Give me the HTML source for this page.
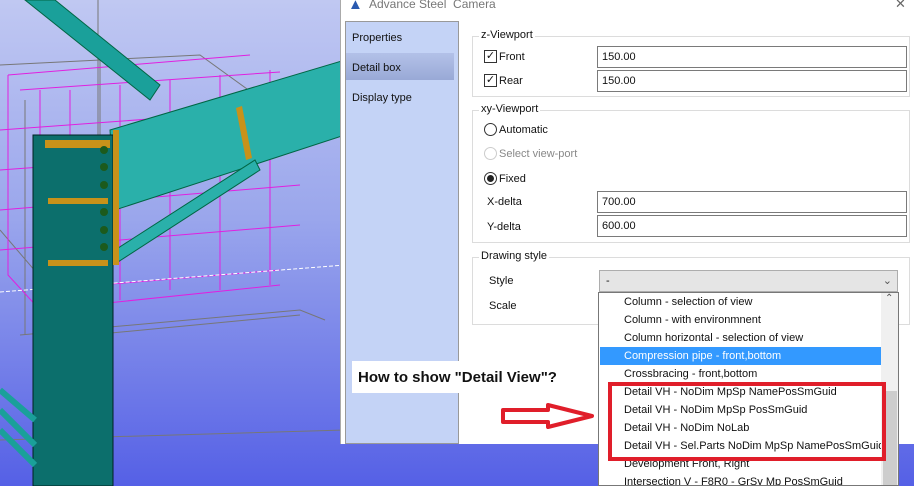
<!DOCTYPE html>
<html><head><meta charset="utf-8"><style>
*{margin:0;padding:0;box-sizing:border-box}
body{width:914px;height:486px;overflow:hidden;position:relative;font-family:"Liberation Sans",sans-serif;font-size:11px;color:#111;background:linear-gradient(#c0c8f2 0%,#9aa6ec 45%,#5560e6 100%)}
.a{position:absolute}
.fs{position:absolute;border:1px solid #dcdcdc}
.lg{position:absolute;background:#fff;padding:0 2px;font-size:11px;top:-8px;left:6px}
.inp{position:absolute;border:1px solid #7a7a7a;background:#fff;padding:4px 4px;height:22px}
.cb{position:absolute;width:13px;height:13px;border:1px solid #333;background:#fff;font-size:11px;line-height:11px;text-align:center}
.rd{position:absolute;width:13px;height:13px;border:1px solid #333;border-radius:50%;background:#fff}
.it{position:absolute;left:25px;font-size:11px;height:18px;line-height:18px;white-space:nowrap}
</style></head><body>
<svg class="a" style="left:0;top:0" width="345" height="486">
<g fill="none" stroke="#777" stroke-width="1">
<path d="M0 65 L200 55 L290 120 M20 335 L300 310 L325 320 M25 335 L25 100 M100 60 L100 310 M0 230 L90 335 L300 315"/>
<path d="M98 0 L98 320 M0 440 L345 430"/>
</g>
<g fill="none" stroke="#e020e0" stroke-width="1">
<path d="M8 75 L250 55 M20 90 L280 72 M40 290 L280 270 M8 75 L8 275 L40 310 L280 285 M40 90 L40 310"/>
<path d="M0 130 L300 108 M0 170 L300 148 M0 210 L300 185 M0 250 L300 225"/>
<path d="M70 90 L70 300 M120 85 L120 300 M170 80 L170 290 M220 75 L220 290 M270 70 L270 285"/>
</g>
<path d="M0 292 L345 265" stroke="#fff" stroke-dasharray="4 2" fill="none"/>
<path d="M25 0 L55 0 L160 85 L150 100 Z" fill="#1aa09a" stroke="#064" />
<path d="M110 130 L345 60 L345 135 L115 210 Z" fill="#2ab0aa" stroke="#064"/>
<path d="M115 250 L255 160 L260 170 L118 262 Z" fill="#2ab0aa" stroke="#064"/>
<rect x="33" y="135" width="80" height="351" fill="#0c6f6c" stroke="#022"/>
<rect x="45" y="140" width="65" height="8" fill="#c8921a"/>
<rect x="48" y="198" width="60" height="6" fill="#c8921a"/>
<rect x="48" y="260" width="60" height="6" fill="#c8921a"/>
<rect x="113" y="130" width="6" height="135" fill="#c8921a"/>
<path d="M236 108 L242 106 L252 158 L246 160Z" fill="#c8921a"/>
<g fill="#1c5a1c"><circle cx="104" cy="150" r="4"/><circle cx="104" cy="167" r="4"/><circle cx="104" cy="185" r="4"/><circle cx="104" cy="212" r="4"/><circle cx="104" cy="230" r="4"/><circle cx="104" cy="247" r="4"/></g>
<path d="M0 390 L35 420 M0 410 L35 445 M0 430 L35 465" stroke="#1aa09a" stroke-width="6"/>
</svg>
<div class="a" style="left:340px;top:0;width:574px;height:444px;background:#fff;border-left:1px solid #aaa"></div>
<div class="a" style="left:348px;top:-4px;color:#2a5ab0;font-size:15px;font-weight:bold">▲</div>
<div class="a" style="left:369px;top:-3px;color:#777;font-size:12px">Advance Steel &nbsp;Camera</div>
<div class="a" style="left:895px;top:-4px;color:#666;font-size:13px">✕</div>
<div class="a" style="left:345px;top:21px;width:114px;height:423px;background:#c4d3f6;border:1px solid #999"></div>
<div class="a" style="left:352px;top:32px">Properties</div>
<div class="a" style="left:346px;top:53px;width:108px;height:27px;background:linear-gradient(#b3c1e8,#99a9d6)"></div>
<div class="a" style="left:352px;top:62px">Detail box</div>
<div class="a" style="left:352px;top:92px">Display type</div>

<div class="fs" style="left:472px;top:36px;width:438px;height:61px"><span class="lg">z-Viewport</span></div>
<div class="cb" style="left:484px;top:50px">✓</div>
<div class="a" style="left:499px;top:51px">Front</div>
<div class="inp" style="left:597px;top:46px;width:310px">150.00</div>
<div class="cb" style="left:484px;top:74px">✓</div>
<div class="a" style="left:499px;top:75px">Rear</div>
<div class="inp" style="left:597px;top:70px;width:310px">150.00</div>

<div class="fs" style="left:472px;top:110px;width:438px;height:133px"><span class="lg">xy-Viewport</span></div>
<div class="rd" style="left:484px;top:123px"></div><div class="a" style="left:499px;top:124px">Automatic</div>
<div class="rd" style="left:484px;top:147px;border-color:#ccc"></div><div class="a" style="left:499px;top:148px;color:#888">Select view-port</div>
<div class="rd" style="left:484px;top:172px"></div><div class="a" style="left:487px;top:175px;width:7px;height:7px;border-radius:50%;background:#222"></div><div class="a" style="left:499px;top:173px">Fixed</div>
<div class="a" style="left:487px;top:196px">X-delta</div>
<div class="inp" style="left:597px;top:191px;width:310px">700.00</div>
<div class="a" style="left:487px;top:221px">Y-delta</div>
<div class="inp" style="left:597px;top:215px;width:310px">600.00</div>

<div class="fs" style="left:472px;top:257px;width:438px;height:68px"><span class="lg">Drawing style</span></div>
<div class="a" style="left:489px;top:275px">Style</div>
<div class="a" style="left:489px;top:300px">Scale</div>
<div class="a" style="left:599px;top:270px;width:299px;height:22px;background:#e5e5e5;border:1px solid #adadad;padding:4px 6px">-<span style="position:absolute;right:5px;top:3px;color:#555">⌄</span></div>

<div class="a" style="left:598px;top:292px;width:301px;height:194px;background:#fff;border:1px solid #777;overflow:hidden">
<div class="a" style="left:282px;top:0;width:18px;height:194px;background:#f0f0f0"></div>
<div class="a" style="left:284px;top:98px;width:14px;height:96px;background:#cdcdcd"></div>
<div class="a" style="left:286px;top:0;font-size:10px;color:#555">⌃</div>
<div class="a" style="left:1px;top:54px;width:281px;height:18px;background:#3399ff"></div>
<div class="a" style="left:0;top:0;width:282px;height:194px;overflow:hidden">
<div class="it" style="top:0">Column - selection of view</div>
<div class="it" style="top:18px">Column - with environmnent</div>
<div class="it" style="top:36px">Column horizontal - selection of view</div>
<div class="it" style="top:54px;color:#fff">Compression pipe - front,bottom</div>
<div class="it" style="top:72px">Crossbracing - front,bottom</div>
<div class="it" style="top:90px">Detail VH - NoDim MpSp NamePosSmGuid</div>
<div class="it" style="top:108px">Detail VH - NoDim MpSp PosSmGuid</div>
<div class="it" style="top:126px">Detail VH - NoDim NoLab</div>
<div class="it" style="top:144px">Detail VH - Sel.Parts NoDim MpSp NamePosSmGuid</div>
<div class="it" style="top:162px">Development Front, Right</div>
<div class="it" style="top:180px">Intersection V - F8R0 - GrSy Mp PosSmGuid</div>
</div>
</div>
<div class="a" style="left:608px;top:382px;width:278px;height:79px;border:4px solid #e01e2a"></div>
<div class="a" style="left:352px;top:361px;width:208px;height:32px;background:#fff;font-weight:bold;font-size:15px;padding:8px 6px;white-space:nowrap">How to show "Detail View"?</div>
<svg class="a" style="left:498px;top:400px" width="100" height="32"><path d="M5 10 L50 10 L50 5 L94 16 L50 27 L50 22 L5 22 Z" fill="#fff" stroke="#e01e2a" stroke-width="4" stroke-linejoin="round"/></svg>
</body></html>
